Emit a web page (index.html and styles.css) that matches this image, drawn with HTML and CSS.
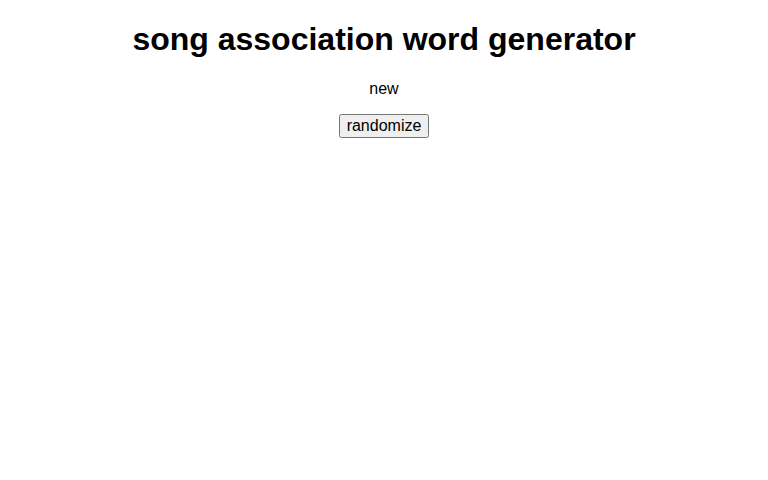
FILE: index.html
```html
<!DOCTYPE html>
<html>
<head>
<meta charset="utf-8">
<link rel="stylesheet" href="styles.css">
</head>
<body class="page">
<h1 class="title">song association word generator</h1>
<p class="word">new</p>
<button class="btn">randomize</button>
</body>
</html>
```

FILE: styles.css
```css
.page {
  margin: 0;
  text-align: center;
  font-family: "Liberation Sans", Arial, sans-serif;
  color: #000;
  background: #fff;
}
.title {
  font-size: 32px;
  margin: 21.44px 0;
}
.word {
  font-size: 16px;
  margin: 16px 0;
}
.btn {
  font-family: "Liberation Sans", Arial, sans-serif;
  font-size: 16px;
}
```
